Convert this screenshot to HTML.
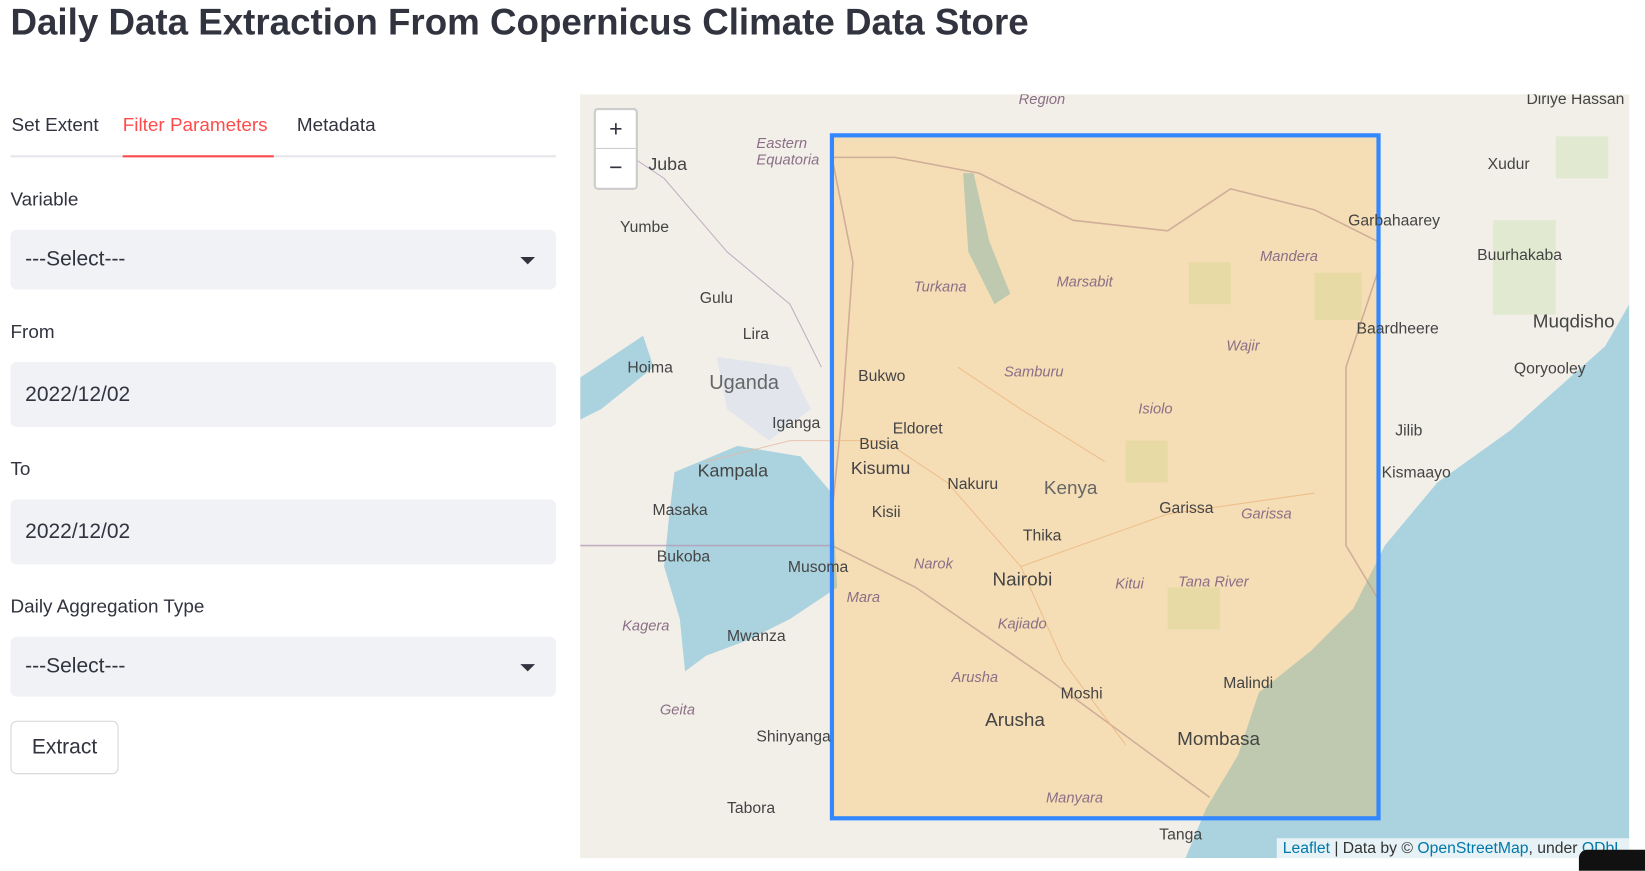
<!DOCTYPE html>
<html><head><meta charset="utf-8"><style>
body{margin:0;width:1645px;height:858px;background:#fff;font-family:"Liberation Sans",sans-serif;color:#31333f;overflow:hidden}
#pg{position:absolute;left:0;top:0;width:1568px;height:818px;transform:scale(1.0491);transform-origin:0 0}
h1{position:absolute;left:10px;top:0;margin:0;font-size:35px;font-weight:bold;line-height:44px;letter-spacing:0}
.tabs{position:absolute;left:10px;top:104px;width:520px;height:44px;border-bottom:2px solid #e6e6ea}
.tab{position:absolute;top:5px;font-size:18px}
.lbl{position:absolute;left:10px;font-size:18px}
.box{position:absolute;left:10px;width:520px;background:#f0f2f6;border-radius:6px;font-size:20px;box-sizing:border-box;padding-left:14px}
.arr{position:absolute;right:20px;top:26px;width:0;height:0;border-left:7px solid transparent;border-right:7px solid transparent;border-top:7px solid #31333f}
.btn{position:absolute;left:10px;top:687px;width:103px;height:51px;border:1px solid #d5d6da;border-radius:6px;box-sizing:border-box;font-size:20px;text-align:center;line-height:49px}
#map{position:absolute;left:553px;top:90px;width:1000px;height:728px;background:#f2efe9;overflow:hidden}
.zc{position:absolute;left:13px;top:13px;width:38px;height:74px;background:#fff;border:2px solid rgba(0,0,0,.2);border-radius:4px;font-size:22px;text-align:center}
.attr{position:absolute;right:0;bottom:0;background:rgba(255,255,255,.7);font-size:15px;padding:1px 6px;color:#333}
.attr a{color:#0078a8;text-decoration:none}
.ml{position:absolute;font-size:15px;color:#444}
.it{position:absolute;font-size:14px;color:#8a6f86;font-style:italic}
</style></head><body><div id="pg">
<h1>Daily Data Extraction From Copernicus Climate Data Store</h1>
<div class="tabs">
<span class="tab" style="left:1px">Set Extent</span>
<span class="tab" style="left:107px;color:#ff4b4b">Filter Parameters</span>
<span class="tab" style="left:273px">Metadata</span>
<div style="position:absolute;left:107px;bottom:-2px;width:144px;height:2px;background:#ff4b4b"></div>
</div>
<div class="lbl" style="top:180px">Variable</div>
<div class="box" style="top:219px;height:57px;line-height:57px">---Select---<div class="arr"></div></div>
<div class="lbl" style="top:306px">From</div>
<div class="box" style="top:345px;height:62px;line-height:62px">2022/12/02</div>
<div class="lbl" style="top:437px">To</div>
<div class="box" style="top:476px;height:62px;line-height:62px">2022/12/02</div>
<div class="lbl" style="top:568px">Daily Aggregation Type</div>
<div class="box" style="top:607px;height:57px;line-height:57px">---Select---<div class="arr"></div></div>
<div class="btn">Extract</div>
<div id="map">
<svg width="1000" height="728" style="position:absolute;left:0;top:0">
<g fill="#d6e6c0" opacity=".6">
<rect x="870" y="120" width="60" height="90"/><rect x="700" y="170" width="45" height="45"/><rect x="580" y="160" width="40" height="40"/>
<rect x="520" y="330" width="40" height="40"/><rect x="560" y="470" width="50" height="40"/><rect x="930" y="40" width="50" height="40"/>
</g>
<path d="M1000,200 L977,240 L887,320 L817,370 L767,430 L737,490 L697,530 L647,570 L627,630 L597,680 L577,728 L1000,728Z" fill="#aad3df"/>
<path d="M90,360 L150,335 L210,345 L240,380 L245,470 L200,500 L160,520 L120,535 L100,550 L95,500 L80,450 L85,400Z" fill="#aad3df"/>
<path d="M0,270 L60,230 L70,260 L20,300 L0,310Z" fill="#aad3df"/>
<path d="M365,75 L375,75 L390,140 L410,190 L395,200 L370,150Z" fill="#aad3df"/>
<path d="M130,250 L200,260 L220,300 L180,330 L140,300Z" fill="#dce3ec" opacity=".7"/>
<g stroke="#b49eb6" fill="none" stroke-width="1.5" opacity=".8">
<path d="M0,430 L240,430"/>
<path d="M240,430 L320,470 L450,560 L600,670"/>
<path d="M240,60 L300,60 L380,75 L470,120 L560,130 L620,90 L700,110 L760,140"/>
<path d="M240,60 L260,160 L250,300 L240,400"/>
<path d="M760,170 L730,260 L730,430 L760,480"/>
<path d="M20,40 L80,80 L140,150 L200,200 L230,260" stroke-width="1"/>
</g>
<g stroke="#e6b9a0" fill="none" stroke-width="1" opacity=".8">
<path d="M290,330 L350,370 L420,450 L460,540 L520,620"/>
<path d="M420,450 L560,400 L700,380"/>
<path d="M360,260 L420,300 L500,350"/>
<path d="M120,350 L200,330 L290,330"/>
</g>
<rect x="240" y="39" width="521" height="651" fill="rgba(255,170,30,0.25)" stroke="#3388ff" stroke-width="4"/>
</svg>
<div class="ml" style="left:65px;top:57px;font-size:17px">Juba</div>
<div class="ml" style="left:38px;top:118px">Yumbe</div>
<div class="ml" style="left:123px;top:265px;font-size:19px;color:#666">Uganda</div>
<div class="ml" style="left:112px;top:349px;font-size:17px">Kampala</div>
<div class="ml" style="left:258px;top:347px;font-size:17px">Kisumu</div>
<div class="ml" style="left:442px;top:365px;font-size:18px;color:#666">Kenya</div>
<div class="ml" style="left:393px;top:452px;font-size:18px">Nairobi</div>
<div class="ml" style="left:386px;top:586px;font-size:18px">Arusha</div>
<div class="ml" style="left:569px;top:604px;font-size:18px">Mombasa</div>
<div class="ml" style="left:908px;top:206px;font-size:18px">Muqdisho</div>
<div class="ml" style="left:298px;top:310px">Eldoret</div>
<div class="ml" style="left:266px;top:325px">Busia</div>
<div class="ml" style="left:265px;top:260px">Bukwo</div>
<div class="ml" style="left:350px;top:363px">Nakuru</div>
<div class="ml" style="left:422px;top:412px">Thika</div>
<div class="ml" style="left:552px;top:386px">Garissa</div>
<div class="ml" style="left:613px;top:553px">Malindi</div>
<div class="ml" style="left:458px;top:563px">Moshi</div>
<div class="ml" style="left:278px;top:390px">Kisii</div>
<div class="ml" style="left:114px;top:186px">Gulu</div>
<div class="ml" style="left:155px;top:220px">Lira</div>
<div class="ml" style="left:45px;top:252px">Hoima</div>
<div class="ml" style="left:183px;top:305px">Iganga</div>
<div class="ml" style="left:69px;top:388px">Masaka</div>
<div class="ml" style="left:73px;top:432px">Bukoba</div>
<div class="ml" style="left:168px;top:604px">Shinyanga</div>
<div class="ml" style="left:140px;top:672px">Tabora</div>
<div class="ml" style="left:552px;top:697px">Tanga</div>
<div class="ml" style="left:198px;top:442px">Musoma</div>
<div class="ml" style="left:140px;top:508px">Mwanza</div>
<div class="ml" style="left:865px;top:58px">Xudur</div>
<div class="ml" style="left:855px;top:145px">Buurhakaba</div>
<div class="ml" style="left:732px;top:112px">Garbahaarey</div>
<div class="ml" style="left:740px;top:215px">Baardheere</div>
<div class="ml" style="left:890px;top:253px">Qoryooley</div>
<div class="ml" style="left:777px;top:312px">Jilib</div>
<div class="ml" style="left:764px;top:352px">Kismaayo</div>
<div class="ml" style="left:902px;top:-4px">Diriye Hassan</div>
<div class="it" style="left:318px;top:175px">Turkana</div>
<div class="it" style="left:454px;top:170px">Marsabit</div>
<div class="it" style="left:404px;top:256px">Samburu</div>
<div class="it" style="left:532px;top:291px">Isiolo</div>
<div class="it" style="left:616px;top:231px">Wajir</div>
<div class="it" style="left:648px;top:146px">Mandera</div>
<div class="it" style="left:168px;top:38px">Eastern<br>Equatoria</div>
<div class="it" style="left:418px;top:-4px">Region</div>
<div class="it" style="left:318px;top:439px">Narok</div>
<div class="it" style="left:254px;top:471px">Mara</div>
<div class="it" style="left:398px;top:496px">Kajiado</div>
<div class="it" style="left:510px;top:458px">Kitui</div>
<div class="it" style="left:570px;top:456px">Tana River</div>
<div class="it" style="left:630px;top:391px">Garissa</div>
<div class="it" style="left:354px;top:547px">Arusha</div>
<div class="it" style="left:444px;top:662px">Manyara</div>
<div class="it" style="left:76px;top:578px">Geita</div>
<div class="it" style="left:40px;top:498px">Kagera</div>
<div class="zc"><div style="height:36px;line-height:36px;border-bottom:1px solid #ccc">+</div><div style="line-height:36px">−</div></div>
<div class="attr"><a>Leaflet</a> | Data by © <a>OpenStreetMap</a>, under <a>ODbL</a></div>
</div>
<div style="position:absolute;left:1505px;top:810px;width:80px;height:20px;background:#111;border-radius:8px 8px 0 0"></div>
</div></body></html>
